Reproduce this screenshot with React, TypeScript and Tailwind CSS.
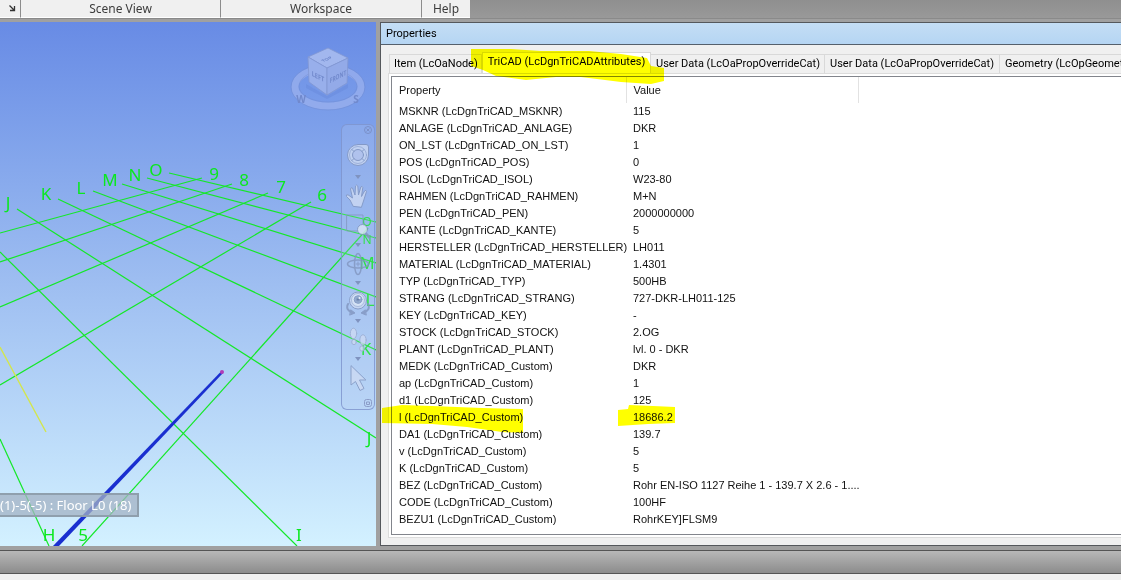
import React from 'react';

const properties = [
  { name: 'MSKNR (LcDgnTriCAD_MSKNR)', value: '115' },
  { name: 'ANLAGE (LcDgnTriCAD_ANLAGE)', value: 'DKR' },
  { name: 'ON_LST (LcDgnTriCAD_ON_LST)', value: '1' },
  { name: 'POS (LcDgnTriCAD_POS)', value: '0' },
  { name: 'ISOL (LcDgnTriCAD_ISOL)', value: 'W23-80' },
  { name: 'RAHMEN (LcDgnTriCAD_RAHMEN)', value: 'M+N' },
  { name: 'PEN (LcDgnTriCAD_PEN)', value: '2000000000' },
  { name: 'KANTE (LcDgnTriCAD_KANTE)', value: '5' },
  { name: 'HERSTELLER (LcDgnTriCAD_HERSTELLER)', value: 'LH011' },
  { name: 'MATERIAL (LcDgnTriCAD_MATERIAL)', value: '1.4301' },
  { name: 'TYP (LcDgnTriCAD_TYP)', value: '500HB' },
  { name: 'STRANG (LcDgnTriCAD_STRANG)', value: '727-DKR-LH011-125' },
  { name: 'KEY (LcDgnTriCAD_KEY)', value: '-' },
  { name: 'STOCK (LcDgnTriCAD_STOCK)', value: '2.OG' },
  { name: 'PLANT (LcDgnTriCAD_PLANT)', value: 'lvl. 0 - DKR' },
  { name: 'MEDK (LcDgnTriCAD_Custom)', value: 'DKR' },
  { name: 'ap (LcDgnTriCAD_Custom)', value: '1' },
  { name: 'd1 (LcDgnTriCAD_Custom)', value: '125' },
  { name: 'l (LcDgnTriCAD_Custom)', value: '18686.2', marked: true },
  { name: 'DA1 (LcDgnTriCAD_Custom)', value: '139.7' },
  { name: 'v (LcDgnTriCAD_Custom)', value: '5' },
  { name: 'K (LcDgnTriCAD_Custom)', value: '5' },
  { name: 'BEZ (LcDgnTriCAD_Custom)', value: 'Rohr EN-ISO 1127 Reihe 1 - 139.7 X 2.6 - 1....' },
  { name: 'CODE (LcDgnTriCAD_Custom)', value: '100HF' },
  { name: 'BEZU1 (LcDgnTriCAD_Custom)', value: 'RohrKEY]FLSM9' },
];

const tabs = [
  { label: 'Item (LcOaNode)' },
  { label: 'TriCAD (LcDgnTriCADAttributes)', selected: true },
  { label: 'User Data (LcOaPropOverrideCat)' },
  { label: 'User Data (LcOaPropOverrideCat)' },
  { label: 'Geometry (LcOpGeometry)' },
];

// x1, y1, x2, y2
const gridLines = [
  [17, 209, 376, 438],
  [58, 199, 376, 350],
  [93, 191, 376, 297],
  [122, 184, 376, 263],
  [147, 178, 376, 238],
  [169, 173, 376, 222],
  [0, 252, 297, 546],
  [0, 439, 49, 546],
  [202, 178, 0, 233],
  [232, 184, 0, 262],
  [268, 193, 0, 307],
  [311, 202, 0, 385],
  [368, 228, 82, 546],
];

const gridLabels = [
  { text: 'J', x: 8, y: 209 },
  { text: 'K', x: 46, y: 200 },
  { text: 'L', x: 81, y: 194 },
  { text: 'M', x: 110, y: 186 },
  { text: 'N', x: 135, y: 181 },
  { text: 'O', x: 156, y: 176 },
  { text: '9', x: 214, y: 180 },
  { text: '8', x: 244, y: 186 },
  { text: '7', x: 281, y: 193 },
  { text: '6', x: 322, y: 201 },
  { text: 'O', x: 367, y: 226, size: 12 },
  { text: 'N', x: 367, y: 244, size: 12 },
  { text: 'M', x: 367, y: 269 },
  { text: 'L', x: 370, y: 306 },
  { text: 'K', x: 366, y: 355 },
  { text: 'J', x: 369, y: 444 },
  { text: 'I', x: 299, y: 541 },
  { text: '5', x: 83, y: 541 },
  { text: 'H', x: 49, y: 541 },
];

const Ribbon = () => (
  <header className="flex h-[19px] shrink-0 border-b border-[#8a8a8a] bg-gradient-to-b from-[#8f8f8f] to-[#999999] text-[12px] leading-4 text-[#3c3c3c]">
    <div className="flex w-5 justify-end border-b border-white bg-[#f0f0f0] pr-1 pt-1">
      <button aria-label="Panel options" className="h-2 w-2">
        <svg viewBox="0 0 8 8" className="block h-2 w-2" fill="none" stroke="#333" strokeWidth="1.3">
          <path d="M1.5 1.5L6 6M6.5 2v4.5H2" />
        </svg>
      </button>
    </div>
    <button className="w-[200px] border-b border-l border-[#8c8c8c] border-b-white bg-[#f0f0f0]">Scene View</button>
    <button className="w-[201px] border-b border-l border-[#8c8c8c] border-b-white bg-[#f0f0f0]">Workspace</button>
    <button className="w-[49px] border-b border-l border-[#8c8c8c] border-b-white bg-[#f0f0f0]">Help</button>
  </header>
);

const ViewCube = () => (
  <g strokeLinejoin="round">
    <ellipse cx="328" cy="87" rx="33" ry="19" fill="none" stroke="#9fb4ee" strokeWidth="7" opacity="0.65" />
    <ellipse cx="328" cy="87" rx="37" ry="23" fill="none" stroke="#7189ce" strokeWidth="0.8" opacity="0.5" />
    <ellipse cx="328" cy="86" rx="29" ry="16" fill="none" stroke="#7189ce" strokeWidth="0.8" opacity="0.5" />
    <path d="M306 84l21 12 21-12v4l-21 11-21-11z" fill="#5b7ace" opacity="0.25" />
    <path d="M328 48l20 10-21 10-19-11z" fill="#a2b7ee" stroke="#8197d2" strokeWidth="0.8" />
    <path d="M308 57l19 11v27l-18-13z" fill="#98afeb" stroke="#8197d2" strokeWidth="0.8" />
    <path d="M348 58l-21 10v27l20-12z" fill="#93aae8" stroke="#8197d2" strokeWidth="0.8" />
    <g fill="#7189cc" fontSize="7" fontWeight="bold" textAnchor="middle">
      <text x="0" y="0" transform="matrix(.8 .4 0 1 318 79)">LEFT</text>
      <text x="0" y="0" transform="matrix(.7 -.36 0 1 338 79)">FRONT</text>
      <text x="0" y="0" fontSize="6" transform="matrix(.8 -.36 .6 .4 328 60)">TOP</text>
      <text x="301" y="103" fontSize="10">W</text>
      <text x="356" y="103" fontSize="10">S</text>
    </g>
  </g>
);

const Scene = () => (
  <svg
    viewBox="0 22 376 524"
    preserveAspectRatio="xMinYMin slice"
    className="absolute inset-0 h-full w-full"
    role="img"
    aria-label="3D model view"
  >
    <g stroke="#14e828" strokeWidth="1.2">
      {gridLines.map(([x1, y1, x2, y2], index) => (
        <line key={index} x1={x1} y1={y1} x2={x2} y2={y2} />
      ))}
    </g>
    <g fill="#0ae81e" fontSize="17" textAnchor="middle" fontFamily="'Noto Sans', sans-serif">
      {gridLabels.map((label, index) => (
        <text key={index} x={label.x} y={label.y} fontSize={label.size}>
          {label.text}
        </text>
      ))}
    </g>
    <line x1="0" y1="347" x2="46" y2="432" stroke="#d3e64c" strokeWidth="1.4" />
    <path d="M221 371.5L53 546h6L223 373z" fill="#1a2fd0" />
    <circle cx="222" cy="372" r="2" fill="#b23ab8" />
    <ViewCube />
  </svg>
);

const Caret = () => (
  <button aria-label="More options" className="flex h-2 w-full items-center justify-center">
    <svg viewBox="0 0 6 4" className="h-1 w-1.5">
      <path d="M0 0h6L3 4z" fill="#7f93c0" />
    </svg>
  </button>
);

type ToolProps = { label: string; children: React.ReactNode };

const Tool = ({ label, children }: ToolProps) => (
  <button aria-label={label} className="flex h-[30px] w-full items-center justify-center">
    <svg
      viewBox="0 0 30 30"
      className="h-[30px] w-[30px] opacity-80"
      fill="#cddaf3"
      stroke="#8195bf"
      strokeWidth="1"
      strokeLinejoin="round"
      strokeLinecap="round"
    >
      {children}
    </svg>
  </button>
);

const NavigationBar = () => (
  <nav className="absolute right-px top-[102px] w-[34px] rounded-md border border-[#7d92cc]/80 bg-[#c3d2f2]/20">
    <div className="flex h-4 justify-end pr-0.5 pt-px">
      <button aria-label="Close navigation bar" className="h-2 w-2">
        <svg viewBox="0 0 8 8" className="block h-2 w-2" fill="none" stroke="#7b90c8">
          <circle cx="4" cy="4" r="3.5" />
          <path d="M2.5 2.5l3 3M5.5 2.5l-3 3" />
        </svg>
      </button>
    </div>
    <div className="h-8">
      <Tool label="Steering wheel">
        <path d="M15 3.5h8q2.5 0 2.5 2.500v8a10.500 10.500 0 1 1-10.500-10.500z" />
        <circle cx="15" cy="14" r="8.5" strokeWidth="0.6" />
        <circle cx="15" cy="14" r="5.5" fill="#b9c8ee" />
        <path d="M9 8.500l2 2M21 8.500l-2 2M9 19.500l2-2M21 19.500l-2-2" />
      </Tool>
    </div>
    <Caret />
    <Tool label="Pan">
      <path d="M10 25l-3-6-3.500-3.500q-1-2 1.500-1.700L9.500 17 7.500 8q.2-2 2-1l2.500 7 .5-9q1.200-2 2.300 0l.7 9 2.300-8q1.500-1.500 2 .5l-1.300 9 3-5.500q1.700-1.500 2 .5L20.500 20 18.500 26z" />
    </Tool>
    <Tool label="Zoom window">
      <path d="M4 4h16v16H4z" fill="none" />
      <path d="M22 22l4 4" strokeWidth="3" />
      <circle cx="19.5" cy="18.5" r="5" fill="#dbe7f5" />
    </Tool>
    <Caret />
    <Tool label="Orbit">
      <g fill="none" strokeWidth="1.5">
        <ellipse cx="15" cy="15" rx="10.5" ry="4" />
        <ellipse cx="15" cy="15" rx="3.5" ry="10.5" />
        <path d="M13 15h4M15 13v4" strokeWidth="1" />
      </g>
    </Tool>
    <Caret />
    <Tool label="Look around">
      <path d="M5 17q-3 6 5 9M25 17q3 6-5 9" fill="none" strokeWidth="2" />
      <path d="M8 23l4 3-5 2zM22 23l-4 3 5 2z" fill="#8195bf" />
      <circle cx="15" cy="13.5" r="8.5" />
      <circle cx="15" cy="13" r="6.5" fill="#e1ebf7" stroke="#a9b9d8" />
      <circle cx="15" cy="12.5" r="3.8" fill="#91a9c8" />
      <circle cx="15" cy="12.5" r="1.6" fill="#5c7396" />
      <circle cx="16.5" cy="11" r="1" fill="#fff" stroke="none" />
    </Tool>
    <Caret />
    <Tool label="Walk">
      <g stroke="#9aabd0">
        <ellipse cx="10.5" cy="8.5" rx="3.2" ry="5.3" />
        <ellipse cx="11" cy="17" rx="2.3" ry="2.7" />
        <ellipse cx="20" cy="15" rx="3.2" ry="5.3" />
        <ellipse cx="19" cy="23.5" rx="2.3" ry="2.7" />
      </g>
    </Tool>
    <Caret />
    <Tool label="Select">
      <path d="M8 3v19l4.500-3.500 4.500 9 4-2-4.500-8.500h6z" />
    </Tool>
    <div className="flex h-4 items-end justify-end pb-0.5 pr-0.5">
      <button aria-label="Customize navigation bar" className="h-2 w-2">
        <svg viewBox="0 0 8 8" className="block h-2 w-2" fill="none" stroke="#8b9dc8">
          <rect x="0.5" y="0.5" width="7" height="7" rx="2" />
          <path d="M2.5 3h3v2.500h-3z" />
        </svg>
      </button>
    </div>
  </nav>
);

const Viewport = () => (
  <main className="relative w-[376px] shrink-0 overflow-hidden bg-gradient-to-b from-[#688be5] via-[#9ebef1] to-[#d3f1ff]">
    <Scene />
    <NavigationBar />
    <div className="absolute bottom-[29px] left-0 border-2 border-l-0 border-[#8f9fad] bg-[#a3b2c3]/75 pr-1.5 text-[13px] leading-5 text-white">
      (1)-5(-5) : Floor L0 (18)
    </div>
  </main>
);

type MarkerProps = { className: string; viewBox: string; d: string };

// Highlighter stroke drawn over the text
const Marker = ({ className, viewBox, d }: MarkerProps) => (
  <svg
    viewBox={viewBox}
    className={`pointer-events-none absolute max-w-none mix-blend-multiply ${className}`}
    aria-hidden="true"
  >
    <path d={d} fill="#ffff00" />
  </svg>
);

const TabStrip = () => (
  <div role="tablist" className="flex h-[21px] items-end pl-px">
    {tabs.map((tab, index) =>
      tab.selected ? (
        <button
          key={index}
          role="tab"
          aria-selected="true"
          className="relative h-[21px] w-[169px] shrink-0 whitespace-nowrap border border-b-0 border-[#d9d9d9] bg-white pb-0.5 text-center"
        >
          {tab.label}
          <Marker
            className="-left-3 -top-1 h-9 w-[194px]"
            viewBox="0 0 194 36"
            d="M0 0L40 0 70 2 118 2 150 5 176 9 180 17 193 19 193 32 180 35 150 33 110 28 85 28 55 31 25 27 12 21 0 17z"
          />
        </button>
      ) : (
        <button
          key={index}
          role="tab"
          aria-selected="false"
          className="h-[19px] shrink-0 whitespace-nowrap border border-b-0 border-l-0 border-[#d9d9d9] bg-[#f0f0f0] px-[5px] text-left first:w-[93px] first:border-l first:px-1 nth-[3]:w-[174px] nth-[4]:w-[175px]"
        >
          {tab.label}
        </button>
      )
    )}
  </div>
);

const PropertyTable = () => (
  <table className="w-full table-fixed text-left font-['Liberation_Sans',sans-serif] text-[11px] leading-[17px] text-[#111]">
    <colgroup>
      <col className="w-[234px]" />
      <col className="w-[232px]" />
      <col />
    </colgroup>
    <thead>
      <tr className="h-[26px]">
        <th className="border-r border-[#e2e2e2] pl-[7px] font-normal">Property</th>
        <th className="border-r border-[#e2e2e2] pl-[7px] font-normal">Value</th>
        <th aria-label="Empty" />
      </tr>
    </thead>
    <tbody>
      {properties.map((property) => (
        <tr key={property.name} className="h-[17px]">
          <td className="relative whitespace-nowrap pl-[7px]">
            {property.name}
            {property.marked && (
              <Marker
                className="-left-2.5 -top-1 h-7 w-[142px]"
                viewBox="0 0 142 28"
                d="M0 3L20 0 50 1 100 3 141 4 141 28 120 27 85 22 50 19 0 18z"
              />
            )}
          </td>
          <td className="relative whitespace-nowrap pl-[7px]">
            {property.value}
            {property.marked && (
              <Marker
                className="-left-2 -top-1 h-6 w-[58px]"
                viewBox="0 0 58 24"
                d="M0 5L10 4 11 0 35 1 57 2 57 18 30 19 0 21z"
              />
            )}
          </td>
          <td />
        </tr>
      ))}
    </tbody>
  </table>
);

const PropertiesPanel = () => (
  <aside className="flex min-w-0 flex-1 flex-col overflow-hidden border border-r-0 border-[#55585c] bg-[#f0f0f0] font-['Roboto',sans-serif] text-[11px] leading-4 text-black">
    <h2 className="h-[22px] shrink-0 border-b border-[#55606c] bg-gradient-to-b from-[#c4def5] to-[#b5d5f3] px-[5px] pt-[3px]">
      Properties
    </h2>
    <div className="flex flex-1 flex-col pb-[7px] pl-[7px] pt-[7px]">
      <TabStrip />
      <div className="flex-1 border border-r-0 border-[#dcdcdc] bg-white pb-0.5 pl-0.5 pt-0.5">
        <div className="h-full border border-r-0 border-[#82858c] pb-1.5">
          <PropertyTable />
        </div>
      </div>
    </div>
  </aside>
);

const App = () => {
  return (
    <div className="flex min-h-screen flex-col overflow-hidden bg-[#a0a0a0] font-['Noto_Sans',sans-serif]">
      <Ribbon />
      <div className="flex flex-1 gap-1 pb-1 pt-[3px]">
        <Viewport />
        <PropertiesPanel />
      </div>
      <footer className="shrink-0 border-t border-[#555] bg-[#f0f0f0]">
        <div className="h-[23px] border-b border-[#555] bg-gradient-to-b from-[#b8b8b8] to-[#8c8c8c]" />
        <div className="h-1.5" />
      </footer>
    </div>
  );
};

export default App;
